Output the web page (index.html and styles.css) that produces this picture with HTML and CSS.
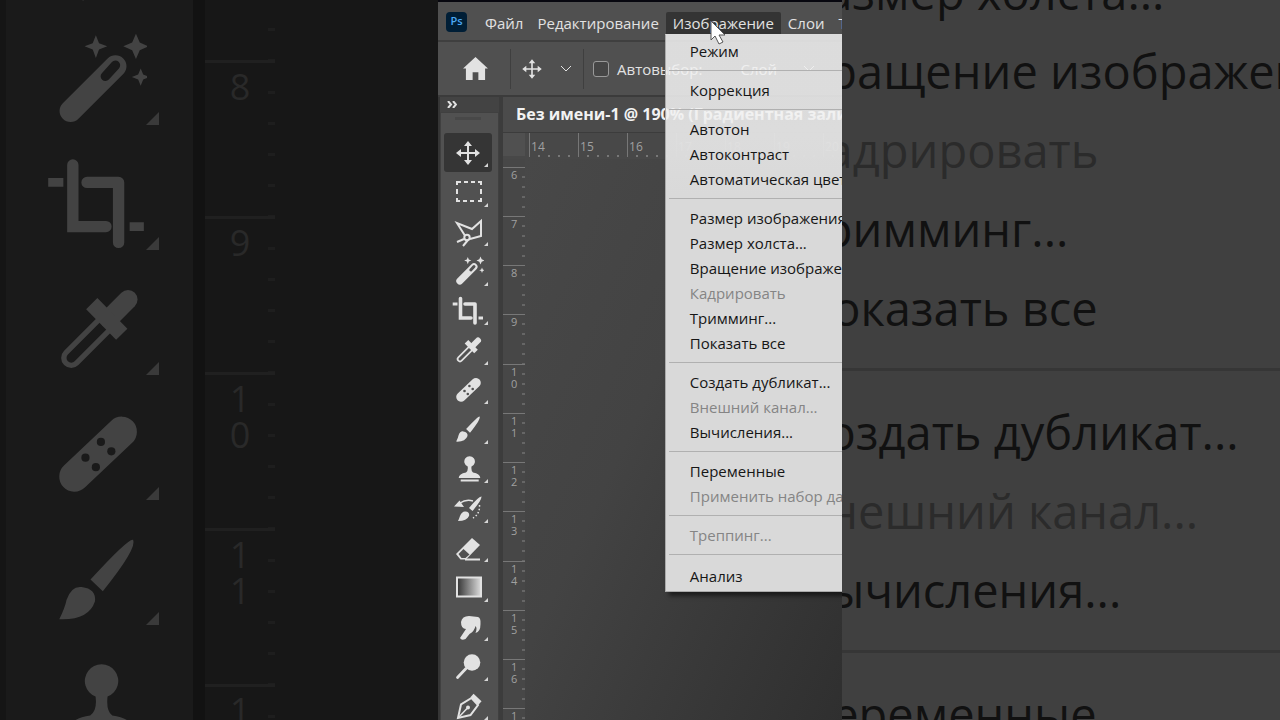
FILE: index.html
```html
<!DOCTYPE html>
<html lang="ru">
<head>
  <meta charset="UTF-8">
  <title>Меню «Изображение»</title>
  <link rel="stylesheet" href="styles.css">
</head>
<body>
  <!-- tool icons -->
  <svg class="sprite" aria-hidden="true">
    <defs>
      <linearGradient id="fade"><stop offset="0" stop-color="#333"/><stop offset="1" stop-color="#ddd"/></linearGradient>
    </defs>
    <symbol id="move" viewBox="0 0 32 32"><path class="line" d="M16 7v18M7 16h18"/><path d="M16 4l4 5h-8zM16 28l4-5h-8zM4 16l5-4v8zM28 16l-5-4v8z"/></symbol>
    <symbol id="marquee" viewBox="0 0 32 32"><path class="line" d="M5 9V6h4M12 6h4M19 6h4M26 6h3v3M29 13v5M29 22v3h-3M22 25h-4M15 25h-4M8 25H5v-3M5 18v-5"/></symbol>
    <symbol id="lasso" viewBox="0 0 32 32"><path class="line" d="M12.600 19L5 7l15 6 9-8v15l-11 3M12 23l-7 3M16 24l-5 6"/><circle class="line" cx="15" cy="21.500" r="2.700"/></symbol>
    <symbol id="wand" viewBox="0 0 32 32"><path class="line round" stroke-width="7" d="M7.800 26L22 11.800"/><path class="cut" stroke-width="3" d="M18.800 15L22 11.500"/><path d="M15.800 2l1 2.500 2.600 1-2.600 1-1 2.700-1-2.700-2.600-1 2.600-1zM28.500 1.500l1.200 2.800 2.800 1.200-2.800 1.200-1.200 2.800-1.200-2.800-2.800-1.200 2.800-1.200zM30 12.500l.8 1.900 1.900.8-1.900.8-.8 2-.8-2-2-.8 2-.8z"/></symbol>
    <symbol id="crop" viewBox="0 0 32 32"><path class="line round" stroke-width="3.600" d="M8.500 3.500V23H19"/><path class="line round" stroke-width="3.600" d="M23 28V9M23 9H13"/><path class="line" stroke-width="2.800" d="M.7 9H5.500M26.500 23H31"/></symbol>
    <symbol id="dropper" viewBox="0 0 32 32"><path class="line round" stroke-width="6.400" d="M8 25L19 14"/><path class="cut" stroke-width="3" d="M8 25L19 14"/><path class="line round" stroke-width="6" d="M26 6.500L20 12.500"/><path class="line" stroke-width="5" d="M14.500 7.800L24 17.500"/></symbol>
    <symbol id="heal" viewBox="0 0 32 32"><path class="line round" stroke-width="9.600" d="M9 23L24 8.800"/><g class="hole"><circle cx="17.400" cy="12" r="1.300"/><circle cx="20.700" cy="15" r="1.300"/><circle cx="12.500" cy="17" r="1.300"/><circle cx="15.800" cy="20" r="1.300"/></g></symbol>
    <symbol id="brush" viewBox="0 0 32 32"><path d="M27.600 3.400Q29 6 18 19.700L14.100 16Q26 3 27.600 3.400zM4.200 28.600Q6 25 6.500 22.500 8 18 11.300 18.400 16 19 15.500 23 13.500 29 4.200 28.600z"/></symbol>
    <symbol id="stamp" viewBox="0 0 32 32"><path d="M15.700 13.500a5.300 5.300 0 1 1 3.800 0Q19 18 21 19.500 28 20.500 28.300 25H6.700Q7 20.500 14 19.500 16.300 18 15.700 13.500zM8.700 26.500h18v2h-18z"/></symbol>
    <symbol id="history" viewBox="0 0 32 32"><path d="M29.500 4.500Q30 8 20.500 19L17 16Q27 4 29.500 4.500zM6 29Q7 27 8 24 10 19 13.500 19.500 18 20 17 24 15 29 6 29zM2 14.600L7.500 8.500 12 15z"/><path class="line" stroke-width="1.500" d="M8 11Q14 7 21 9"/><path class="line" stroke-width="1.500" stroke-dasharray="1.500 2" d="M27.500 13Q28 22 21 26"/></symbol>
    <symbol id="eraser" viewBox="0 0 32 32"><path d="M4 22L20 6l8 7-14 14.500H8.500z"/><path class="hole" d="M11.500 17l6 5.500-4 3.500h-4L6.500 22z"/><path class="line" d="M13 27.500h15"/></symbol>
    <symbol id="gradient" viewBox="0 0 32 32"><path class="line" style="fill:url(#fade)" d="M5 6.500h24v19H5z"/></symbol>
    <symbol id="smudge" viewBox="0 0 32 32"><path d="M8 27l6-9q-5 0-5-7 1-6 8-6l9 1q3 1 2.500 7 0 8-5 9 2-5 0-7-1 5-6 8l-4 5q-4 2-5.500-1z"/></symbol>
    <symbol id="dodge" viewBox="0 0 32 32"><circle cx="20" cy="12.500" r="8.300"/><path class="line round" stroke-width="2.800" d="M14 18.500L5.500 27.500"/></symbol>
    <symbol id="pen" viewBox="0 0 32 32"><path class="line" d="M6 28L9 14.500 19.500 8l6.500 7-7.500 10z"/><path class="line" stroke-width="1.500" d="M6 28l9-9.500"/><circle cx="16" cy="17.500" r="2"/><path class="line" stroke-width="4.500" d="M20 5.500l8 7.500"/></symbol>
  </svg>

  <div class="screen">
    <div class="backdrop backdrop-tools" aria-hidden="true">
      <div class="big-tools">
        <div class="big-tool"><svg><use href="#lasso"/></svg></div>
        <div class="big-tool"><svg><use href="#wand"/></svg></div>
        <div class="big-tool"><svg><use href="#crop"/></svg></div>
        <div class="big-tool"><svg><use href="#dropper"/></svg></div>
        <div class="big-tool"><svg><use href="#heal"/></svg></div>
        <div class="big-tool"><svg><use href="#brush"/></svg></div>
        <div class="big-tool"><svg><use href="#stamp"/></svg></div>
      </div>
      <div class="big-ruler">
        <span></span><span>8</span><span>9</span><span>1<br>0</span><span>1<br>1</span><span>1</span>
      </div>
    </div>

    <main class="app">
      <nav class="menubar">
        <span class="logo">Ps</span>
        <button class="menu-title">Файл</button>
        <button class="menu-title">Редактирование</button>
        <div class="menu-open">
          <button class="menu-title active">Изображение</button>
          <div class="menu">
            <div class="group"><button>Режим</button></div>
            <div class="group"><button>Коррекция</button></div>
            <div class="group">
              <button>Автотон</button>
              <button>Автоконтраст</button>
              <button>Автоматическая цветовая коррекция</button>
            </div>
            <div class="group">
              <button>Размер изображения...</button>
              <button>Размер холста...</button>
              <button>Вращение изображения</button>
              <button disabled>Кадрировать</button>
              <button>Тримминг...</button>
              <button>Показать все</button>
            </div>
            <div class="group">
              <button>Создать дубликат...</button>
              <button disabled>Внешний канал...</button>
              <button>Вычисления...</button>
            </div>
            <div class="group">
              <button>Переменные</button>
              <button disabled>Применить набор данных...</button>
            </div>
            <div class="group"><button disabled>Треппинг...</button></div>
            <div class="group"><button>Анализ</button></div>
          </div>
          <svg class="cursor" viewBox="0 0 16 26"><path d="M1 1v19l4-4 4 8 4-2-4-7h6z"/></svg>
        </div>
        <button class="menu-title">Слои</button>
        <button class="menu-title">Текст</button>
      </nav>

      <div class="options">
        <button class="home" aria-label="Домой"><svg viewBox="0 0 26 24"><path d="M13 0l13 12h-3v12h-7v-8h-6v8H3V12H0z"/></svg></button>
        <div class="current-tool">
          <svg class="move-icon"><use href="#move"/></svg>
          <svg class="chevron" viewBox="0 0 12 8"><path d="M1 1l5 5 5-5"/></svg>
        </div>
        <label class="auto"><input type="checkbox">Автовыбор:</label>
        <button class="layer">Слой <svg class="chevron" viewBox="0 0 12 8"><path d="M1 1l5 5 5-5"/></svg></button>
      </div>

      <div class="workspace">
        <aside class="toolbox">
          <button class="expand" aria-label="Развернуть"><svg viewBox="0 0 10 7"><path d="M1 0l3 3.500L1 7M6 0l3 3.500L6 7"/></svg></button>
          <div class="tools">
            <div class="grip"></div>
            <button class="tool selected" aria-label="Перемещение"><svg><use href="#move"/></svg></button>
            <button class="tool" aria-label="Прямоугольная область"><svg><use href="#marquee"/></svg></button>
            <button class="tool" aria-label="Прямолинейное лассо"><svg><use href="#lasso"/></svg></button>
            <button class="tool" aria-label="Волшебная палочка"><svg><use href="#wand"/></svg></button>
            <button class="tool" aria-label="Рамка"><svg><use href="#crop"/></svg></button>
            <button class="tool" aria-label="Пипетка"><svg><use href="#dropper"/></svg></button>
            <button class="tool" aria-label="Восстанавливающая кисть"><svg><use href="#heal"/></svg></button>
            <button class="tool" aria-label="Кисть"><svg><use href="#brush"/></svg></button>
            <button class="tool" aria-label="Штамп"><svg><use href="#stamp"/></svg></button>
            <button class="tool" aria-label="Архивная кисть"><svg><use href="#history"/></svg></button>
            <button class="tool" aria-label="Ластик"><svg><use href="#eraser"/></svg></button>
            <button class="tool" aria-label="Градиент"><svg><use href="#gradient"/></svg></button>
            <button class="tool" aria-label="Палец"><svg><use href="#smudge"/></svg></button>
            <button class="tool" aria-label="Осветлитель"><svg><use href="#dodge"/></svg></button>
            <button class="tool" aria-label="Перо"><svg><use href="#pen"/></svg></button>
          </div>
        </aside>

        <section class="document">
          <div class="tab">Без имени-1 @ 190% (Градиентная заливка 1, RGB/8)</div>
          <div class="ruler-top">
            <div class="corner"></div>
            <span>14</span><span>15</span><span>16</span><span>17</span><span>18</span><span>19</span><span>20</span>
          </div>
          <div class="view">
            <div class="ruler-left">
              <span>6</span><span>7</span><span>8</span><span>9</span><span>1<br>0</span><span>1<br>1</span><span>1<br>2</span><span>1<br>3</span><span>1<br>4</span><span>1<br>5</span><span>1<br>6</span><span>1</span>
            </div>
            <div class="canvas"></div>
          </div>
        </section>
      </div>
    </main>

    <div class="backdrop backdrop-menu" aria-hidden="true">
      <div class="big-group">
        <p>Размер холста...</p>
        <p>Вращение изображения</p>
        <p class="off">Кадрировать</p>
        <p>Тримминг...</p>
        <p>Показать все</p>
      </div>
      <div class="big-group">
        <p>Создать дубликат...</p>
        <p class="off">Внешний канал...</p>
        <p>Вычисления...</p>
      </div>
      <div class="big-group">
        <p>Переменные</p>
      </div>
    </div>
  </div>
</body>
</html>
```

FILE: styles.css
```css
* {
  box-sizing: border-box;
}

body {
  margin: 0;
  background: #171717;
  font-family: "Open Sans", "Noto Sans", sans-serif;
  font-size: 15px;
}

button {
  border: none;
  background: none;
  padding: 0;
  margin: 0;
  font: inherit;
  color: inherit;
  white-space: nowrap;
}

svg {
  display: block;
  fill: currentColor;
}

.sprite {
  position: absolute;
  width: 0;
  height: 0;
}

.line {
  fill: none;
  stroke: currentColor;
}

.line:not([stroke-width]) {
  stroke-width: 2;
}

.round {
  stroke-linecap: round;
}

.cut {
  fill: none;
  stroke: var(--panel);
  stroke-linecap: round;
}

.hole {
  fill: var(--panel);
}

.screen {
  display: grid;
  grid-template-columns: 1fr 56.1vh 1fr;
  height: 100vh;
  overflow: hidden;
}

.backdrop {
  overflow: hidden;
  height: 100vh;
}

/* left side */
.backdrop-tools {
  --panel: #1a1a1a;
  display: flex;
  background: #171717;
}

.big-tools {
  width: 205px;
  border-left: 6px solid #151515;
  border-right: 12px solid #121212;
  background: var(--panel);
  color: #434343;
}

.big-tool {
  position: relative;
  display: flex;
  align-items: center;
  justify-content: center;
  height: 125px;
  padding-right: 6px;
}

.big-tool:first-child {
  margin-top: -108px;
}

.big-tool svg {
  width: 101px;
  height: 101px;
  overflow: visible;
}

.big-tool::after {
  content: "";
  position: absolute;
  right: 34px;
  bottom: 17px;
  border-left: 13px solid transparent;
  border-bottom: 13px solid #3a3a3a;
}

.big-ruler {
  width: 70px;
  color: #292929;
  font-size: 36px;
  line-height: 36px;
  text-align: center;
}

.big-ruler span {
  display: block;
  height: 156px;
  padding-top: 6px;
  border-top: 3px solid #202020;
  background: repeating-linear-gradient(transparent 0 28px, #1e1e1e 28px 31px) right / 7px 100% no-repeat;
}

.big-ruler span:first-child {
  margin-top: -96px;
}

/* right side */
.backdrop-menu {
  background: #404040;
  color: #111;
  font-size: 47px;
  line-height: 79px;
}

.big-group {
  padding: 22px 0 20px;
  border-bottom: 3px solid #363636;
}

.big-group:first-child {
  margin-top: -69px;
}

.big-group p {
  margin: 0 0 0 -44px;
  white-space: nowrap;
}

.big-group .off {
  color: #2b2b2b;
}

/* editor */
.app {
  --panel: #515151;
  display: flex;
  flex-direction: column;
  height: 100vh;
  overflow: hidden;
  border-top: 2px solid #07070f;
  background: #505050;
  color: #e2e2e2;
}

.menubar {
  display: flex;
  align-items: flex-start;
  height: 40px;
  padding: 10px 0 0 8px;
  border-bottom: 2px solid #3f3f3f;
}

.logo {
  flex: none;
  width: 21px;
  height: 20px;
  margin-right: 11px;
  border-radius: 4px;
  background: #001e36;
  color: #4ba8f5;
  font-size: 11px;
  font-weight: 600;
  line-height: 18px;
  text-align: center;
}

.menu-title {
  height: 22px;
  padding: 0 7px;
  line-height: 18px;
}

.menu-title.active {
  border-radius: 2px 2px 0 0;
  background: #343434;
}

.menu-open {
  position: relative;
  z-index: 2;
}

.menu {
  position: absolute;
  top: 22px;
  left: -1px;
  width: 320px;
  padding-top: 4px;
  border: 1px solid #aaa;
  border-top-color: #ddd;
  background: linear-gradient(rgba(241, 241, 241, 0.87) 80px, rgba(228, 228, 228, 0.95) 100px, #d9d9d9 160px);
  box-shadow: 4px 4px 4px rgba(0, 0, 0, 0.5);
  color: #161616;
}

.group {
  margin-left: 3px;
  padding: 7px 0 6px;
  border-top: 1px solid #b0b0b0;
}

.group:first-child {
  padding-top: 0;
  border-top: none;
}

.group:last-child {
  padding: 9px 0 2px;
}

.group button {
  display: block;
  height: 25px;
  padding-left: 21px;
  line-height: 25px;
}

.group button:disabled {
  color: #858585;
}

.cursor {
  position: absolute;
  top: 8px;
  left: 44px;
  width: 16px;
  height: 26px;
  fill: #fff;
  stroke: #555;
}

.options {
  display: flex;
  align-items: center;
  height: 55px;
  border-bottom: 2px solid #3b3b3b;
}

.home {
  display: flex;
  justify-content: center;
  width: 72px;
  padding-left: 2px;
}

.home svg {
  width: 25px;
  height: 23px;
}

.current-tool {
  display: flex;
  align-items: center;
  gap: 15px;
  width: 74px;
  height: 40px;
  padding-left: 8px;
  border-left: 1px solid #3f3f3f;
  border-right: 1px solid #3f3f3f;
}

.move-icon {
  width: 26px;
  height: 26px;
}

.chevron {
  width: 12px;
  height: 8px;
  fill: none;
  stroke: currentColor;
}

.auto {
  display: flex;
  align-items: center;
  gap: 8px;
  margin-left: 9px;
}

.auto input {
  appearance: none;
  width: 16px;
  height: 16px;
  margin: 0;
  border: 1px solid #999;
  border-radius: 3px;
  background: #464646;
}

.layer {
  display: flex;
  align-items: center;
  gap: 26px;
  margin-left: 38px;
}

.workspace {
  display: flex;
  flex: 1;
  min-height: 0;
}

.toolbox {
  width: 65px;
  border-left: 2px solid #353535;
  border-right: 4px solid #3c3c3c;
  background: #434343;
}

.expand {
  display: block;
  height: 15px;
  padding-left: 7px;
}

.expand svg {
  width: 10px;
  height: 7px;
  fill: none;
  stroke: currentColor;
  stroke-width: 2;
}

.tools {
  display: flex;
  flex-direction: column;
  align-items: center;
  height: 100%;
  padding-right: 3px;
  border: 1px solid #404040;
  background: var(--panel);
}

.grip {
  flex: none;
  width: 26px;
  height: 3px;
  margin: 4px 0 13px;
  background: #484848;
}

.tool {
  position: relative;
  display: flex;
  flex: none;
  align-items: center;
  justify-content: center;
  width: 48px;
  height: 39px;
}

.tool:nth-child(odd) {
  height: 40px;
}

.tool.selected {
  border-radius: 3px;
  background: #353535;
}

.tool svg {
  width: 32px;
  height: 32px;
  overflow: visible;
}

.tool::after {
  content: "";
  position: absolute;
  right: 4px;
  bottom: 5px;
  border-left: 4px solid transparent;
  border-bottom: 4px solid #d5d5d5;
}

.document {
  display: flex;
  flex: 1;
  flex-direction: column;
  min-width: 0;
}

.tab {
  height: 36px;
  padding-left: 13px;
  border-bottom: 1px solid #3c3c3c;
  overflow: hidden;
  background: #4b4b4b;
  color: #f2f2f2;
  font-size: 16px;
  font-weight: 700;
  line-height: 34px;
  white-space: nowrap;
}

.ruler-top {
  display: flex;
  height: 26px;
  overflow: hidden;
  background: #484848;
  color: #a0a0a0;
  font-size: 12px;
}

.ruler-top .corner {
  flex: none;
  width: 22px;
  height: 23px;
  margin-right: 4px;
  background: #505050;
}

.ruler-top span {
  flex: none;
  width: 49px;
  height: 24px;
  padding: 5px 0 0 1px;
  border-left: 1px solid #777;
  background: repeating-linear-gradient(90deg, transparent 0 8px, #777 8px 10px) bottom / 100% 2px no-repeat;
  line-height: 17px;
}

.view {
  display: flex;
  flex: 1;
  min-height: 0;
}

.ruler-left {
  width: 22px;
  padding-top: 8px;
  overflow: hidden;
  background: #474747;
  color: #a0a0a0;
  font-size: 11px;
  line-height: 12px;
  text-align: center;
}

.ruler-left span {
  display: block;
  height: 49px;
  padding-top: 1px;
  border-top: 1px solid #777;
  background: repeating-linear-gradient(transparent 0 8px, #666 8px 10px) right / 3px 100% no-repeat;
}

.ruler-left span:nth-child(4n) {
  height: 50px;
}

.canvas {
  flex: 1;
  background: linear-gradient(115deg, #484848, #434343 40%, #2f2f2f);
}
```
